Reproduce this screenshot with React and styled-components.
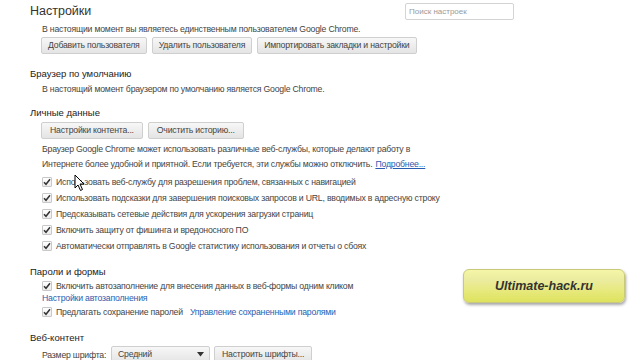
import React from 'react';
import styled, { createGlobalStyle } from 'styled-components';

const GlobalStyle = createGlobalStyle`
  html, body {
    margin: 0;
    padding: 0;
    background: #ffffff;
    font-family: "Liberation Sans", Arial, sans-serif;
  }
  #root {
    width: 640px;
    height: 360px;
    overflow: hidden;
    position: relative;
  }
`;

const Page = styled.div`
  width: 640px;
  height: 360px;
  overflow: hidden;
  color: #444;
  font-family: "Liberation Sans", Arial, sans-serif;
`;

const Header = styled.div`
  position: relative;
  z-index: 1;
  height: 24px;
  display: flex;
  align-items: flex-start;
  justify-content: space-between;
  padding: 0 126px 0 30px;
  background: #fff;
`;

const Title = styled.h1`
  margin: 0;
  font-size: 12.5px;
  font-weight: normal;
  color: #333;
  line-height: 22px;
`;

const Search = styled.div`
  width: 104px;
  height: 15px;
  border: 1px solid #d4d4d4;
  border-radius: 2px;
  font-size: 8px;
  color: #9a9a9a;
  padding-left: 3px;
  line-height: 15px;
  margin-top: 3px;
`;

const Content = styled.div`
  padding-left: 30px;
  margin-top: -2px;
`;

const Section = styled.section`
  margin-top: ${p => p.$top || 0}px;
`;

const SectionTitle = styled.div`
  font-size: 9.5px;
  color: #222;
  line-height: 14px;
`;

const Body = styled.div`
  padding-left: 12px;
`;

const Text = styled.div`
  font-size: 8.7px;
  letter-spacing: -0.2px;
  line-height: ${p => p.$lh || 14}px;
  color: #444;
  margin-top: ${p => p.$top || 0}px;
  white-space: nowrap;
`;

const ButtonRow = styled.div`
  display: flex;
  gap: 5px;
  align-items: center;
  margin-top: ${p => p.$top || 0}px;
  margin-left: -1px;
`;

const Button = styled.div`
  height: 15px;
  padding: 0 ${p => p.$pad || 6}px;
  border: 1px solid #cfcfcf;
  border-radius: 2px;
  background: linear-gradient(#f7f7f7, #e4e4e4);
  font-size: 8.7px;
  letter-spacing: -0.2px;
  line-height: 15px;
  color: #444;
  white-space: nowrap;
`;

const Link = styled.span`
  color: #2a5db0;
  text-decoration: ${p => (p.$under ? 'underline' : 'none')};
  margin-left: ${p => p.$gap || 0}px;
`;

const CheckList = styled.div`
  margin-top: ${p => p.$top || 0}px;
`;

const CheckRow = styled.div`
  display: flex;
  align-items: center;
  gap: 4px;
  height: ${p => p.$h || 16}px;
  font-size: 8.7px;
  letter-spacing: -0.2px;
  color: #444;
  white-space: nowrap;
`;

const Box = styled.span`
  width: 8px;
  height: 8px;
  border: 1px solid #c8c8c8;
  border-radius: 1px;
  background: linear-gradient(#fff, #ececec);
  display: inline-flex;
  align-items: center;
  justify-content: center;
  flex: none;
`;

const FontRow = styled.div`
  display: flex;
  align-items: center;
  margin-top: ${p => p.$top || 0}px;
  font-size: 8.7px;
  letter-spacing: -0.2px;
  color: #444;
`;

const Label = styled.span`
  width: 69px;
  white-space: nowrap;
`;

const Select = styled.div`
  width: 86px;
  height: 15px;
  border: 1px solid #cfcfcf;
  border-radius: 2px;
  background: linear-gradient(#f7f7f7, #e4e4e4);
  padding: 0 5px 0 6px;
  line-height: 15px;
  display: flex;
  justify-content: space-between;
  align-items: center;
  margin-right: 4px;
`;

const Badge = styled.div`
  position: absolute;
  left: 463px;
  top: 269px;
  width: 160px;
  height: 32px;
  border: 1px solid #c9c97c;
  border-radius: 6px;
  background: linear-gradient(#f6f6a8 0%, #ececa0 30%, #e6e878 70%, #dde25e 100%);
  box-shadow: 1px 2px 3px rgba(0, 0, 0, 0.35);
  display: flex;
  align-items: center;
  justify-content: center;
  font-style: italic;
  font-weight: bold;
  font-size: 12.5px;
  color: #333;
`;

const Cursor = styled.svg`
  position: absolute;
  left: 74px;
  top: 174px;
  z-index: 2;
`;

const Check = () => (
  <Box>
    <svg width="8" height="8" viewBox="0 0 8 8">
      <path d="M1 4.2 L3 6.3 L7 1.2" fill="none" stroke="#333" strokeWidth="1.5" />
    </svg>
  </Box>
);

const personal = [
  'Использовать веб-службу для разрешения проблем, связанных с навигацией',
  'Использовать подсказки для завершения поисковых запросов и URL, вводимых в адресную строку',
  'Предсказывать сетевые действия для ускорения загрузки страниц',
  'Включить защиту от фишинга и вредоносного ПО',
  'Автоматически отправлять в Google статистику использования и отчеты о сбоях',
];

export default function App() {
  return (
    <>
      <GlobalStyle />
      <Page>
        <Header>
          <Title>Настройки</Title>
          <Search>Поиск настроек</Search>
        </Header>
        <Content>
          <Body>
            <Text>В настоящии момент вы являетесь единственным пользователем Google Chrome.</Text>
            <ButtonRow $top={1}>
              <Button>Добавить пользователя</Button>
              <Button>Удалить пользователя</Button>
              <Button>Импортировать закладки и настройки</Button>
            </ButtonRow>
          </Body>

          <Section $top={13}>
            <SectionTitle>Браузер по умолчанию</SectionTitle>
            <Body>
              <Text $top={1}>В настоящий момент браузером по умолчанию является Google Chrome.</Text>
            </Body>
          </Section>

          <Section $top={10}>
            <SectionTitle>Личные данные</SectionTitle>
            <Body>
              <ButtonRow $top={2}>
                <Button $pad={8}>Настройки контента...</Button>
                <Button $pad={8}>Очистить историю...</Button>
              </ButtonRow>
              <Text $top={3} $lh={15}>
                Браузер Google Chrome может использовать различные веб-службы, которые делают работу в
                <br />
                Интернете более удобной и приятной. Если требуется, эти службы можно отключить.
                <Link $under $gap={3}>Подробнее...</Link>
              </Text>
              <CheckList $top={2}>
                {personal.map(t => (
                  <CheckRow key={t}>
                    <Check />
                    {t}
                  </CheckRow>
                ))}
              </CheckList>
            </Body>
          </Section>

          <Section $top={11}>
            <SectionTitle>Пароли и формы</SectionTitle>
            <Body>
              <CheckRow $h={13}>
                <Check />
                Включить автозаполнение для внесения данных в веб-формы одним кликом
              </CheckRow>
              <Text $lh={12}>
                <Link>Настройки автозаполнения</Link>
              </Text>
              <CheckRow $h={15}>
                <Check />
                Предлагать сохранение паролей
                <Link $gap={3}>Управление сохраненными паролями</Link>
              </CheckRow>
            </Body>
          </Section>

          <Section $top={12}>
            <SectionTitle>Веб-контент</SectionTitle>
            <Body>
              <FontRow $top={1}>
                <Label>Размер шрифта:</Label>
                <Select>
                  <span>Средний</span>
                  <svg width="7" height="5" viewBox="0 0 7 5">
                    <path d="M0 0 H7 L3.5 4.5 Z" fill="#333" />
                  </svg>
                </Select>
                <Button $pad={7}>Настроить шрифты...</Button>
              </FontRow>
            </Body>
          </Section>
        </Content>
        <Badge>Ultimate-hack.ru</Badge>
        <Cursor width="12" height="18" viewBox="0 0 12 18">
          <path d="M1 1 L1 14 L4 11 L6.5 16.5 L8.5 15.5 L6 10 L10 10 Z" fill="#fff" stroke="#000" strokeWidth="1" />
        </Cursor>
      </Page>
    </>
  );
}
